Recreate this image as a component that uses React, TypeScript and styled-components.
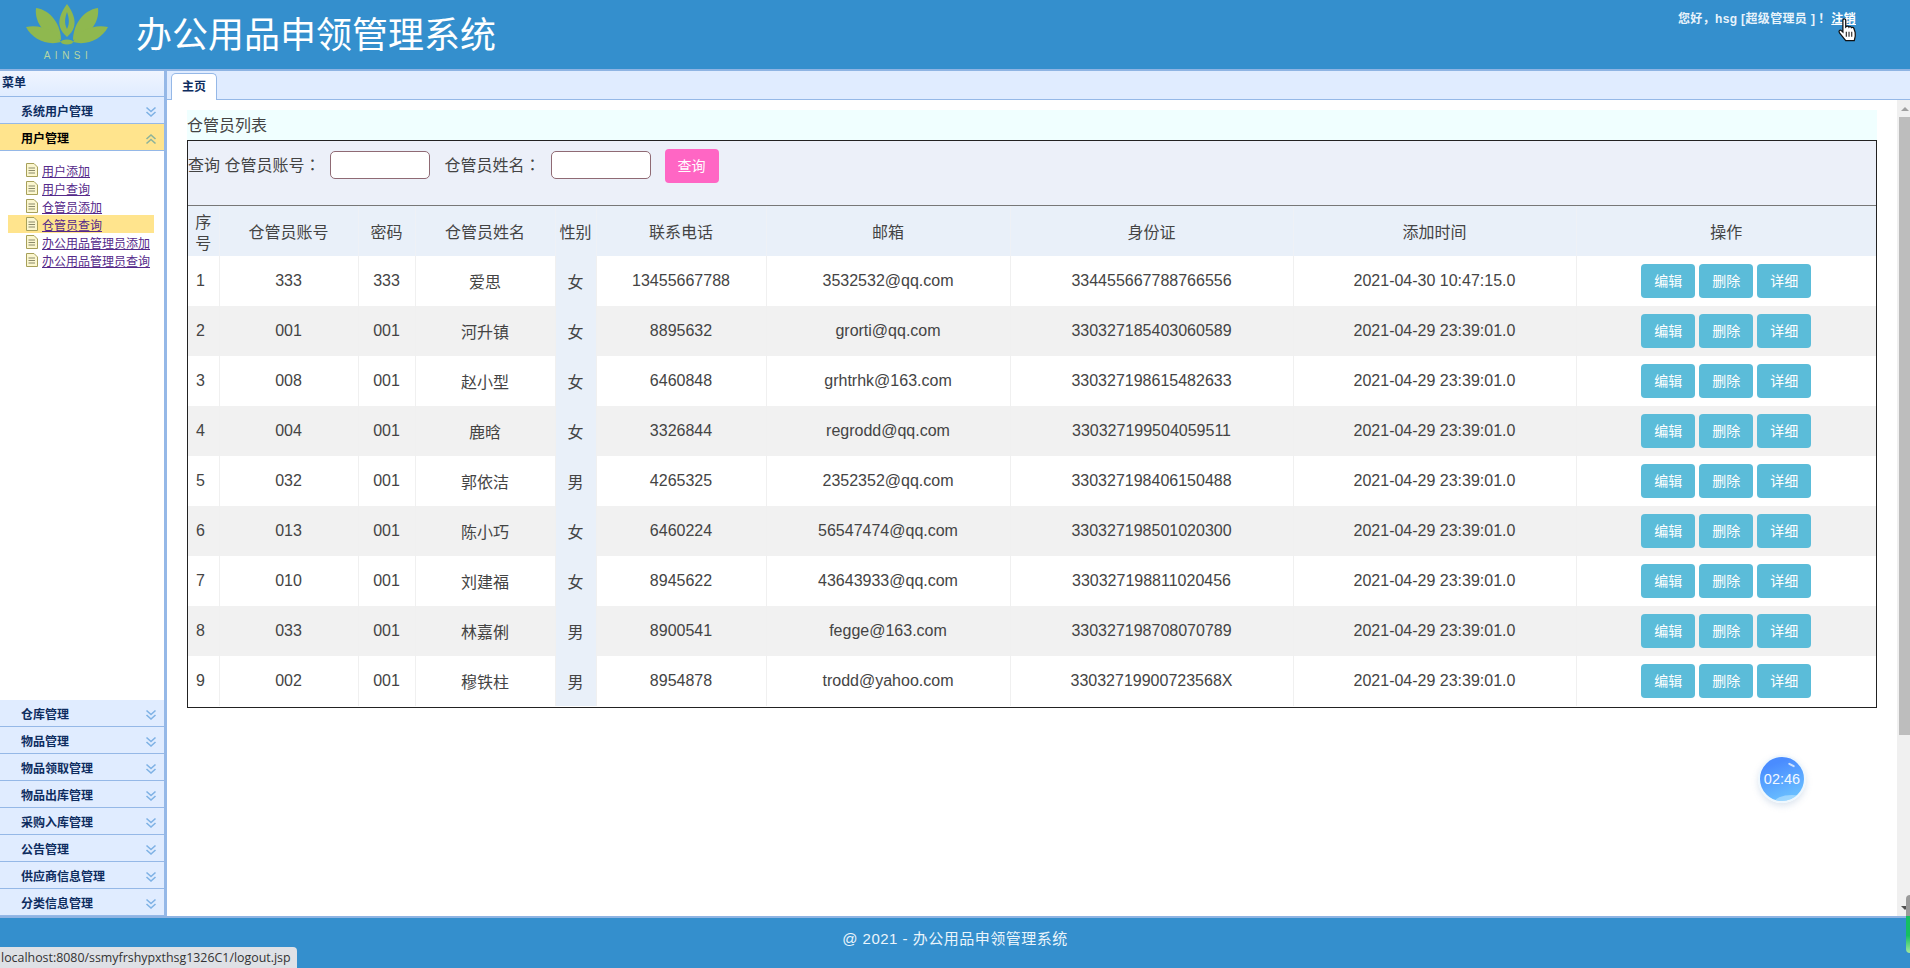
import React from "react"
import styled, { createGlobalStyle } from "styled-components"

const GlobalStyle = createGlobalStyle`
    html, body {
        margin: 0;
        padding: 0;
        height: 100%;
        overflow: hidden;
    }
    body {
        font-family: "Liberation Sans", "Noto Sans CJK SC", sans-serif;
        color: #333;
    }
    #root {
        height: 100%;
    }
    * {
        box-sizing: border-box;
    }
`

const menuTop = ["系统用户管理"]
const menuBottom = ["仓库管理", "物品管理", "物品领取管理", "物品出库管理", "采购入库管理", "公告管理", "供应商信息管理", "分类信息管理"]
const links = ["用户添加", "用户查询", "仓管员添加", "仓管员查询", "办公用品管理员添加", "办公用品管理员查询"]
const columns = [31, 139, 57, 140, 41, 170, 244, 283, 283, 300]
const heads = ["序号", "仓管员账号", "密码", "仓管员姓名", "性别", "联系电话", "邮箱", "身份证", "添加时间", "操作"]
const rows = [
    ["1", "333", "333", "爱思", "女", "13455667788", "3532532@qq.com", "334455667788766556", "2021-04-30 10:47:15.0"],
    ["2", "001", "001", "河升镇", "女", "8895632", "grorti@qq.com", "330327185403060589", "2021-04-29 23:39:01.0"],
    ["3", "008", "001", "赵小型", "女", "6460848", "grhtrhk@163.com", "330327198615482633", "2021-04-29 23:39:01.0"],
    ["4", "004", "001", "鹿晗", "女", "3326844", "regrodd@qq.com", "330327199504059511", "2021-04-29 23:39:01.0"],
    ["5", "032", "001", "郭依洁", "男", "4265325", "2352352@qq.com", "330327198406150488", "2021-04-29 23:39:01.0"],
    ["6", "013", "001", "陈小巧", "女", "6460224", "56547474@qq.com", "330327198501020300", "2021-04-29 23:39:01.0"],
    ["7", "010", "001", "刘建福", "女", "8945622", "43643933@qq.com", "330327198811020456", "2021-04-29 23:39:01.0"],
    ["8", "033", "001", "林嘉俐", "男", "8900541", "fegge@163.com", "330327198708070789", "2021-04-29 23:39:01.0"],
    ["9", "002", "001", "穆铁柱", "男", "8954878", "trodd@yahoo.com", "33032719900723568X", "2021-04-29 23:39:01.0"],
]

const Logo = () => (
    <LogoSvg viewBox="0 0 90 62" width="90" height="62">
        <g fill="#8fb84f">
            <path d="M13 8 C28 10 38 25 38 40 C24 37 11 24 13 8 Z" />
            <path d="M75 8 C60 10 50 25 50 40 C64 37 77 24 75 8 Z" />
            <path d="M3 27 C18 24 33 31 38 42 C24 46 9 39 3 27 Z" />
            <path d="M85 27 C70 24 55 31 50 42 C64 46 79 39 85 27 Z" />
            <path d="M44 4 C38 12 35 20 37 27 C38 31 41 34 44 37 C47 34 50 31 51 27 C53 20 50 12 44 4 Z M44 12 C42 18 41 23 44 29 C47 23 46 18 44 12 Z" fillRule="evenodd" />
            <ellipse cx="44" cy="42" rx="6" ry="2.6" />
        </g>
        <LogoText x="45" y="59" textAnchor="middle">AINSI</LogoText>
    </LogoSvg>
)

const Chevrons = ({ up }: { up?: boolean }) => (
    <ChevronSvg viewBox="0 0 12 12" width="12" height="12" $up={up}>
        <path d="M1.5 1.5 L6 5.5 L10.5 1.5 M1.5 6 L6 10 L10.5 6" fill="none" strokeWidth="1.6" />
    </ChevronSvg>
)

const PageIcon = () => (
    <svg viewBox="0 0 12 14" width="12" height="14">
        <path d="M.5 .5 H8 L11.5 4 V13.5 H.5 Z" fill="#fbf6cf" stroke="#a7a05a" />
        <path d="M2.5 5 H9 M2.5 7.5 H9 M2.5 10 H9" stroke="#8a8a6a" />
    </svg>
)

const HandCursor = () => (
    <CursorSvg viewBox="0 0 19 22" width="22" height="25">
        <path
            d="M5 2 C5 .4 7.5 .4 7.5 2 V8 L8 7.6 C8.7 6.9 10 7.1 10.3 8 C10.8 7.3 12.2 7.4 12.5 8.5 C13 8 14.5 8.2 14.7 9.3 L15.8 12.6 C16.3 15 16 17 15 20 H7.5 L2 13 C1 11.7 2.2 10.1 3.6 11.1 L5 12.4 Z"
            fill="#fff"
            stroke="#111"
            strokeWidth="1.1"
        />
        <path d="M8 12 V16.5 M10.4 12 V16.5 M12.8 12 V16.5" stroke="#111" strokeWidth="0.9" />
    </CursorSvg>
)

export default function App() {
    return (
        <>
            <GlobalStyle />
            <Page>
                <Header>
                    <Logo />
                    <Title>办公用品申领管理系统</Title>
                    <Welcome>
                        您好，hsg [超级管理员 ]<Colon>！</Colon> <LogoutLink>注销</LogoutLink>
                    </Welcome>
                </Header>
                <Body>
                    <Sidebar>
                        <MenuTitle>菜单</MenuTitle>
                        {menuTop.map((name) => (
                            <AccordionHead key={name}>
                                {name}
                                <Chevrons />
                            </AccordionHead>
                        ))}
                        <AccordionHead $active>
                            用户管理
                            <Chevrons up />
                        </AccordionHead>
                        <LinkList>
                            {links.map((name) => (
                                <LinkRow key={name} $active={name === "仓管员查询"}>
                                    <PageIcon />
                                    <MenuLink>{name}</MenuLink>
                                </LinkRow>
                            ))}
                        </LinkList>
                        {menuBottom.map((name) => (
                            <AccordionHead key={name}>
                                {name}
                                <Chevrons />
                            </AccordionHead>
                        ))}
                    </Sidebar>
                    <Main>
                        <TabBar>
                            <Tab>主页</Tab>
                        </TabBar>
                        <ContentRow>
                            <Content>
                                <ListTitle>仓管员列表</ListTitle>
                                <Panel>
                                    <SearchBar>
                                        <SearchLabel>查询 仓管员账号<Colon>：</Colon></SearchLabel>
                                        <SearchInput />
                                        <SearchLabel>仓管员姓名<Colon>：</Colon></SearchLabel>
                                        <SearchInput />
                                        <SearchButton>查询</SearchButton>
                                    </SearchBar>
                                    <Table>
                                        <colgroup>
                                            {columns.map((w, i) => (
                                                <col key={i} width={w} />
                                            ))}
                                        </colgroup>
                                        <thead>
                                            <tr>
                                                {heads.map((h) => (
                                                    <HeadCell key={h}>{h}</HeadCell>
                                                ))}
                                            </tr>
                                        </thead>
                                        <tbody>
                                            {rows.map((row) => (
                                                <Row key={row[0]}>
                                                    {row.map((text, i) =>
                                                        i === 3 || i === 4 ? (
                                                            <Cell key={i} $shaded={i === 4}>
                                                                <CjkText>{text}</CjkText>
                                                            </Cell>
                                                        ) : (
                                                            <Cell key={i} $left={i === 0}>
                                                                {text}
                                                            </Cell>
                                                        ),
                                                    )}
                                                    <Cell>
                                                        <Actions>
                                                            <ActionButton>编辑</ActionButton>
                                                            <ActionButton>删除</ActionButton>
                                                            <ActionButton>详细</ActionButton>
                                                        </Actions>
                                                    </Cell>
                                                </Row>
                                            ))}
                                        </tbody>
                                    </Table>
                                </Panel>
                            </Content>
                            <Scrollbar>
                                <ArrowUp />
                                <Thumb />
                                <ArrowDown />
                            </Scrollbar>
                        </ContentRow>
                    </Main>
                </Body>
                <Footer>@ 2021 - 办公用品申领管理系统</Footer>
                <Timer>02:46</Timer>
                <SideWidget />
                <StatusBar>localhost:8080/ssmyfrshypxthsg1326C1/logout.jsp</StatusBar>
                <HandCursor />
            </Page>
        </>
    )
}

const Page = styled.div`
    position: relative;
    display: flex;
    flex-direction: column;
    height: 968px;
    width: 1910px;
    overflow: hidden;
`

const Header = styled.header`
    display: flex;
    align-items: flex-start;
    height: 71px;
    flex: none;
    padding-left: 23px;
    background: #348fcd;
    border-bottom: 2px solid #8fb4e3;
    color: #fff;
`

const LogoSvg = styled.svg`
    display: block;
    flex: none;
`

const LogoText = styled.text`
    font-family: "Liberation Sans", sans-serif;
    font-size: 10px;
    letter-spacing: 4.5px;
    fill: #b4d6a6;
`

const Title = styled.h1`
    margin: 14px 0 0 23px;
    font-size: 36px;
    line-height: 44px;
    font-weight: 400;
`

const Welcome = styled.div`
    margin: 10px 54px 0 auto;
    font-size: 12px;
    letter-spacing: 0.35px;
    line-height: 16px;
    font-weight: 700;
    color: #e8f3fb;
`

const LogoutLink = styled.span`
    text-decoration: underline;
    color: #fff;
`

const CursorSvg = styled.svg`
    position: absolute;
    left: 1837px;
    top: 18px;
`

const Body = styled.div`
    display: flex;
    flex: 1;
    min-height: 0;
`

const Sidebar = styled.aside`
    display: flex;
    flex-direction: column;
    width: 167px;
    flex: none;
    border-right: 3px solid #95b8e7;
    background: #fff;
`

const MenuTitle = styled.div`
    height: 26px;
    flex: none;
    padding-left: 2px;
    font-size: 12px;
    font-weight: 700;
    line-height: 24px;
    color: #0e2d5f;
    background: linear-gradient(#eff5ff, #e0ecff);
    border-bottom: 1px solid #95b8e7;
`

const AccordionHead = styled.div<{ $active?: boolean }>`
    display: flex;
    align-items: center;
    justify-content: space-between;
    height: 27px;
    flex: none;
    padding: 0 7px 0 21px;
    font-size: 12px;
    font-weight: 700;
    color: ${({ $active }) => ($active ? "#000" : "#0e2d5f")};
    background: ${({ $active }) => ($active ? "#ffe48d" : "#e0ecff")};
    border-bottom: 1px solid #95b8e7;
`

const ChevronSvg = styled.svg<{ $up?: boolean }>`
    margin-top: 3px;
    stroke: ${({ $up }) => ($up ? "#8db39a" : "#7fb2e5")};
    transform: ${({ $up }) => ($up ? "rotate(180deg)" : "none")};
`

const LinkList = styled.div`
    display: flex;
    flex-direction: column;
    flex: 1;
    padding: 10px 10px 0 8px;
`

const LinkRow = styled.div<{ $active?: boolean }>`
    display: flex;
    align-items: center;
    gap: 4px;
    height: 18px;
    padding-left: 18px;
    background: ${({ $active }) => ($active ? "#ffe48d" : "transparent")};
`

const MenuLink = styled.a`
    font-size: 12px;
    color: #55298a;
    text-decoration: underline;
    white-space: nowrap;
`

const Main = styled.main`
    display: flex;
    flex-direction: column;
    flex: 1;
    min-width: 0;
`

const TabBar = styled.div`
    display: flex;
    align-items: flex-end;
    height: 29px;
    flex: none;
    padding-left: 4px;
    background: #e0ecff;
    border-bottom: 1px solid #95b8e7;
`

const Tab = styled.div`
    width: 46px;
    height: 27px;
    margin-bottom: -1px;
    font-size: 12px;
    font-weight: 700;
    line-height: 26px;
    text-align: center;
    color: #0e2d5f;
    background: #fff;
    border: 1px solid #95b8e7;
    border-bottom: none;
    border-radius: 5px 5px 0 0;
`

const ContentRow = styled.div`
    display: flex;
    flex: 1;
    min-height: 0;
`

const Content = styled.div`
    flex: 1;
    min-width: 0;
    padding: 10px 20px 0;
`

const ListTitle = styled.div`
    height: 30px;
    font-size: 16px;
    line-height: 32px;
    color: #444;
    background: #f0ffff;
`

const Panel = styled.div`
    padding-bottom: 1px;
    border: 1px solid #222;
`

const SearchBar = styled.div`
    display: flex;
    align-items: flex-start;
    height: 65px;
    background: #ecf0f9;
    border-bottom: 1px solid #777;
`

const SearchLabel = styled.span`
    margin-top: 12px;
    font-size: 16px;
    line-height: 22px;
    color: #444;
    white-space: pre;
    &:nth-of-type(2) {
        margin-left: 14px;
    }
`

const Colon = styled.span`
    font-family: "Noto Sans CJK TC", sans-serif;
`

const SearchInput = styled.input`
    width: 100px;
    height: 28px;
    margin-top: 10px;
    margin-left: 10px;
    padding: 0 6px;
    background: #fff;
    border: 1px solid #8f6a74;
    border-radius: 5px;
    outline: none;
`

const SearchButton = styled.button`
    width: 54px;
    height: 34px;
    margin-top: 8px;
    margin-left: 14px;
    padding: 0 0 2px;
    font-family: inherit;
    font-size: 14px;
    color: #fff;
    background: #ff66c4;
    border: none;
    border-radius: 4px;
`

const Table = styled.table`
    width: 100%;
    table-layout: fixed;
    border-collapse: collapse;
`

const HeadCell = styled.th`
    height: 50px;
    padding: 3px 4px 0;
    font-size: 16px;
    font-weight: 400;
    line-height: 21px;
    color: #444;
    background: #e9f0f9;
    border-right: 1px solid #eef1f6;
    text-align: center;
    &:last-child {
        border-right: none;
    }
`

const Row = styled.tr`
    &:nth-child(even) {
        background: #f1f1f1;
    }
`

const Cell = styled.td<{ $left?: boolean; $shaded?: boolean }>`
    height: 50px;
    padding: 0 8px;
    font-size: 16px;
    color: #444;
    text-align: ${({ $left }) => ($left ? "left" : "center")};
    background: ${({ $shaded }) => ($shaded ? "#e9f0f9" : "transparent")};
    border-right: 1px solid #f0f0f0;
    white-space: nowrap;
    &:last-child {
        border-right: none;
    }
`

const CjkText = styled.span`
    display: inline-block;
    line-height: 1;
    transform: translateY(2px);
`

const Actions = styled.div`
    display: flex;
    justify-content: center;
    gap: 4px;
`

const ActionButton = styled.button`
    width: 54px;
    height: 34px;
    padding: 0 0 2px;
    font-family: inherit;
    font-size: 14px;
    color: #fff;
    background: #5bbcd9;
    border: none;
    border-radius: 4px;
`

const Scrollbar = styled.div`
    position: relative;
    display: flex;
    flex-direction: column;
    align-items: flex-end;
    width: 13px;
    flex: none;
    padding-top: 17px;
    background: #f0f0f0;
`

const Thumb = styled.div`
    width: 11px;
    height: 618px;
    background: #bdbdbd;
`

const ArrowUp = styled.div`
    position: absolute;
    top: 7px;
    left: 4px;
    width: 0;
    height: 0;
    border-left: 4px solid transparent;
    border-right: 4px solid transparent;
    border-bottom: 4px solid #a0a0a0;
`

const ArrowDown = styled.div`
    position: absolute;
    bottom: 6px;
    left: 4px;
    width: 0;
    height: 0;
    border-left: 4px solid transparent;
    border-right: 4px solid transparent;
    border-top: 4px solid #505050;
`

const Footer = styled.footer`
    height: 52px;
    flex: none;
    font-size: 15px;
    letter-spacing: 0.5px;
    line-height: 42px;
    text-align: center;
    color: #eaf4fb;
    background: #348fcd;
    border-top: 2px solid #8fb4e3;
`

const Timer = styled.div`
    position: absolute;
    left: 1758px;
    top: 755px;
    width: 48px;
    height: 48px;
    overflow: hidden;
    font-size: 14.5px;
    line-height: 44px;
    text-align: center;
    color: #f2f8ff;
    background: linear-gradient(160deg, #4a8cff 20%, #6ec6ff 95%);
    border: 2px solid #eef7fd;
    border-radius: 50%;
    box-shadow: 0 3px 6px rgba(120, 150, 190, 0.25);
    &::before {
        content: "";
        position: absolute;
        left: 28px;
        top: 7px;
        width: 7px;
        height: 2px;
        background: rgba(255, 255, 255, 0.7);
        border-radius: 1px;
        transform: rotate(28deg);
    }
    &::after {
        content: "";
        position: absolute;
        left: 14px;
        bottom: -10px;
        width: 36px;
        height: 16px;
        background: rgba(200, 235, 255, 0.55);
        border-radius: 50%;
    }
`

const SideWidget = styled.div`
    position: absolute;
    left: 1906px;
    top: 895px;
    width: 6px;
    height: 58px;
    background: linear-gradient(#9a9a9a 0 21px, #15bf62 21px, #15bf62 70%, #a4e99c);
    border-radius: 4px 0 0 4px;
`

const StatusBar = styled.div`
    position: absolute;
    left: 0;
    bottom: 0;
    width: 297px;
    height: 21px;
    padding-left: 1px;
    font-family: "Open Sans", "Noto Sans", sans-serif;
    font-size: 12.4px;
    line-height: 21px;
    color: #333;
    background: #dee1e6;
    border-radius: 0 4px 0 0;
    white-space: nowrap;
`
